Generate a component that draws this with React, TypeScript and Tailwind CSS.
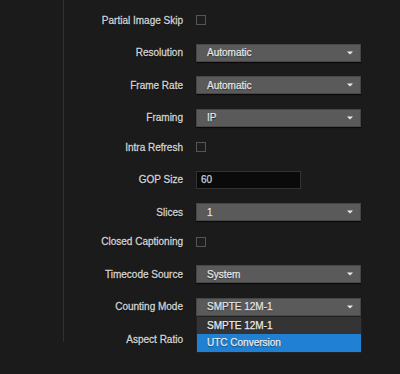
type Row =
  | { kind: 'check'; label: string }
  | { kind: 'select'; label: string; value: string; open?: boolean }
  | { kind: 'input'; label: string; value: string };

const rows: Row[] = [
  { kind: 'check', label: 'Partial Image Skip' },
  { kind: 'select', label: 'Resolution', value: 'Automatic' },
  { kind: 'select', label: 'Frame Rate', value: 'Automatic' },
  { kind: 'select', label: 'Framing', value: 'IP' },
  { kind: 'check', label: 'Intra Refresh' },
  { kind: 'input', label: 'GOP Size', value: '60' },
  { kind: 'select', label: 'Slices', value: '1' },
  { kind: 'check', label: 'Closed Captioning' },
  { kind: 'select', label: 'Timecode Source', value: 'System' },
  { kind: 'select', label: 'Counting Mode', value: 'SMPTE 12M-1', open: true },
  { kind: 'select', label: 'Aspect Ratio', value: '' },
];

const font = { fontFamily: '"Liberation Sans", Arial, sans-serif' };

function Caret() {
  return (
    <svg width="6" height="4" viewBox="0 0 6 4" className="shrink-0">
      <path d="M0 0.5 H6 L3 3.5 Z" fill="#ececec" />
    </svg>
  );
}

function Select({ value, open }: { value: string; open?: boolean }) {
  return (
    <div className="relative">
      <div className="w-[165px] h-[18px] flex items-center justify-between pl-[10px] pr-[7px] bg-[#5a5a5a] border border-[#464646] shadow-[0_1px_1px_rgba(0,0,0,0.6)] text-[10px] text-[#e6e6e6] [text-shadow:0_1px_1px_rgba(0,0,0,0.7)] [-webkit-text-stroke:0.25px_#e6e6e6]">
        <span>{value}</span>
        <Caret />
      </div>
      {open && (
        <div className="absolute left-0 top-[18px] w-[166px] z-10 border border-[#222] text-[10px] text-[#ececec] [text-shadow:0_1px_1px_rgba(0,0,0,0.6)] [-webkit-text-stroke:0.25px_#ececec]">
          <div className="h-[17px] flex items-center pl-[10px] bg-[#343434]">SMPTE 12M-1</div>
          <div className="h-[18px] flex items-center pl-[10px] bg-[#1f80d4]">UTC Conversion</div>
        </div>
      )}
    </div>
  );
}

export default function App() {
  return (
    <div className="w-[400px] h-[374px] bg-[#1b1b1b] flex overflow-hidden" style={font}>
      <div className="w-[64px] h-[342px] border-r border-[#303030] shrink-0" />
      <div className="flex flex-col pt-[6.75px]">
        {rows.map((row) => (
          <div
            key={row.label}
            className={
              row.kind === 'check'
                ? 'flex items-center h-[29.5px] pb-[3px]'
                : 'flex items-center h-[32.5px]'
            }
          >
            <div className="w-[119px] text-right text-[10px] text-[#d2d2d2] [text-shadow:0_1px_1px_rgba(0,0,0,0.9)] [-webkit-text-stroke:0.3px_#d2d2d2] whitespace-nowrap">
              {row.label}
            </div>
            <div className="ml-[13px]">
              {row.kind === 'check' && (
                <div className="w-[10px] h-[10px] border border-[#555] bg-[#1d1d1d]" />
              )}
              {row.kind === 'select' && <Select value={row.value} open={row.open} />}
              {row.kind === 'input' && (
                <div className="w-[105px] h-[18px] flex items-center pl-[4px] bg-[#0a0a0a] border border-[#333] text-[10px] text-[#c5d0dc] [-webkit-text-stroke:0.25px_#c5d0dc]">
                  {row.value}
                </div>
              )}
            </div>
          </div>
        ))}
      </div>
    </div>
  );
}
